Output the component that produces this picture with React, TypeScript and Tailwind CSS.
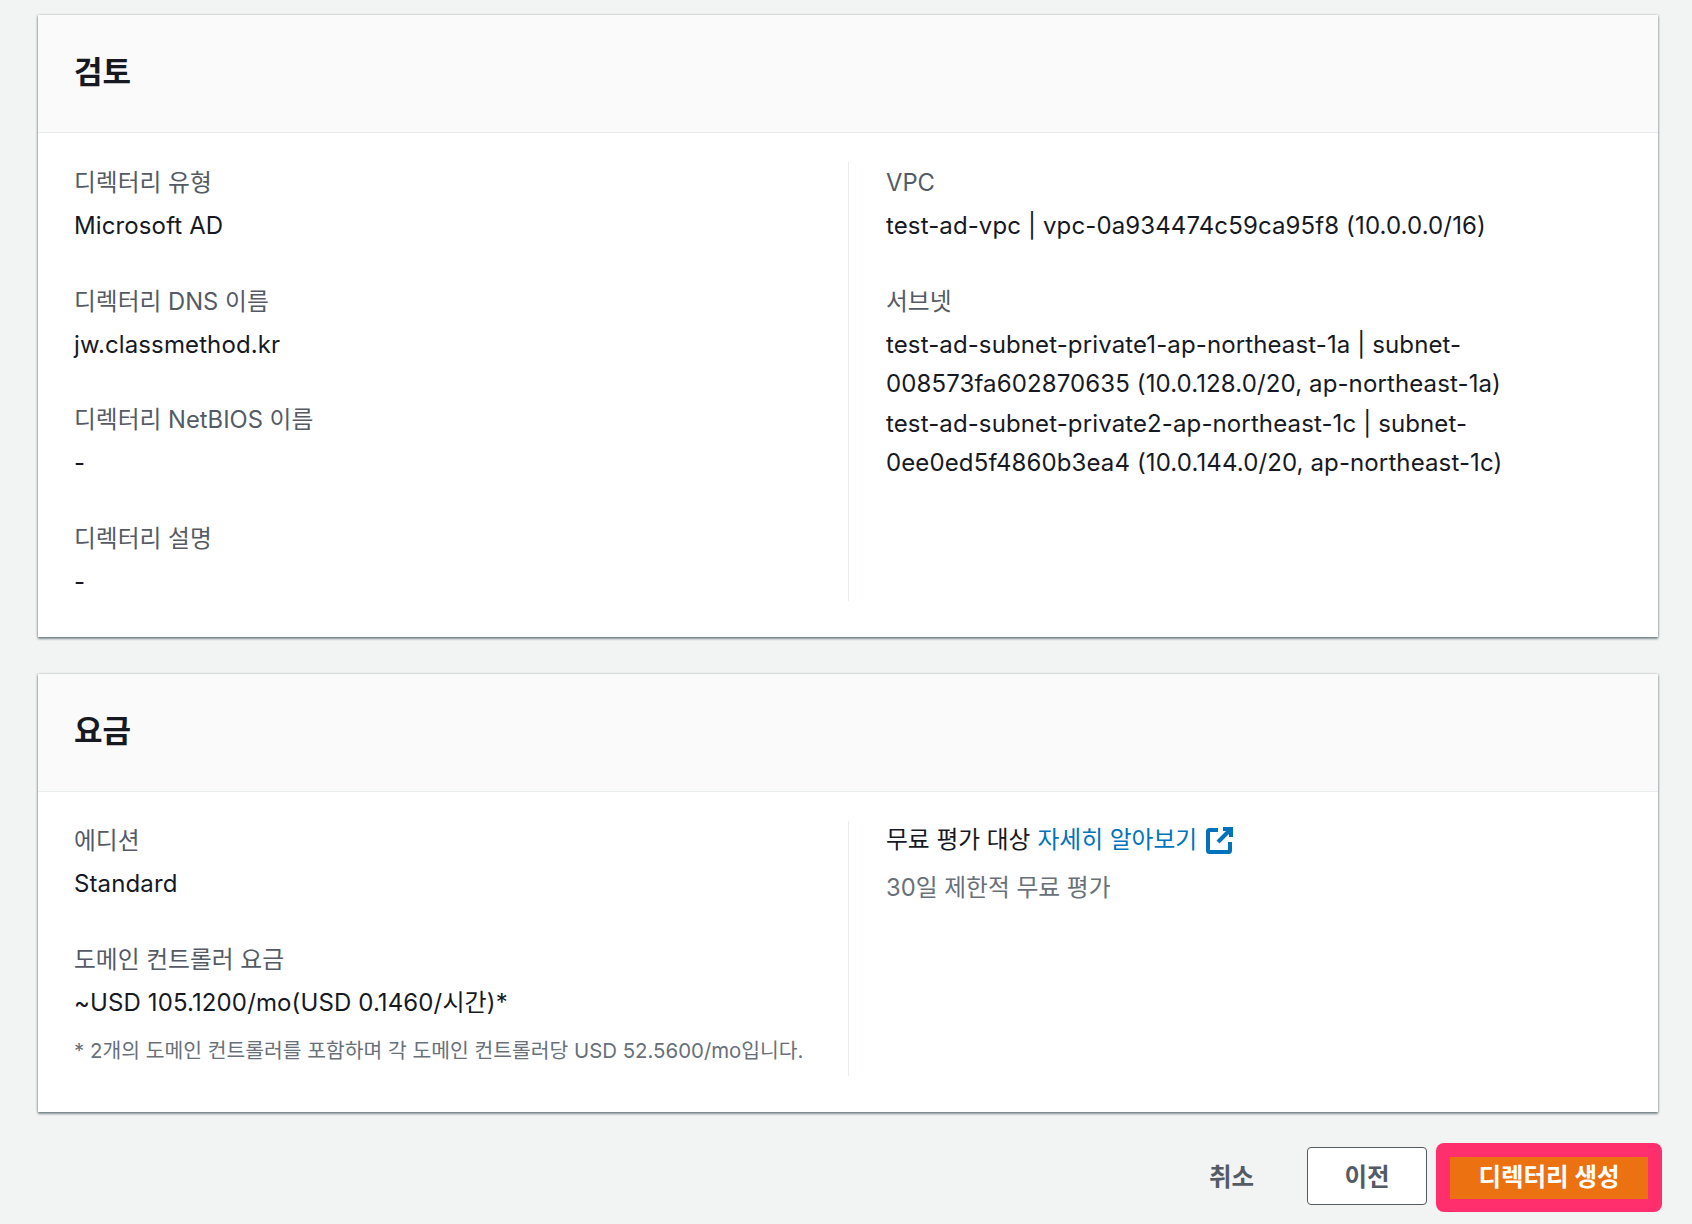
import React from "react";

const fontStack = "font-['Inter','Noto_Sans_CJK_KR',sans-serif]";

function Field({ label, children }: { label: string; children: React.ReactNode }) {
  return (
    <div className="mb-[35px] last:mb-0">
      <div className="h-[41px] leading-[41px] text-[#545b64]">{label}</div>
      <div className="mt-[3px] text-[24px] tracking-[0.12px] leading-[39.5px] text-[#16191f]">{children}</div>
    </div>
  );
}

function Card({ title, children }: { title: string; children: React.ReactNode }) {
  return (
    <section className="bg-white shadow-[0_2px_2px_rgba(0,28,36,0.45),-1px_0_2px_rgba(0,28,36,0.2),1px_0_2px_rgba(0,28,36,0.15)]">
      <header className="h-[118px] pl-[36px] pb-[3px] flex items-center bg-[#fafafa] border-b border-[#eaeded]">
        <h2 className="text-[31px] font-bold text-[#16191f]">{title}</h2>
      </header>
      {children}
    </section>
  );
}

function ExternalIcon() {
  return (
    <svg viewBox="0 0 28 28" className="w-[28px] h-[28px] ml-[9px] inline-block" fill="none" stroke="#0073bb" strokeWidth="4">
      <path d="M12 4H3.5a1.5 1.5 0 0 0-1.5 1.5v19a1.5 1.5 0 0 0 1.5 1.5h19a1.5 1.5 0 0 0 1.5-1.5V16" />
      <path d="M17 3h8v8" />
      <path d="M25 3L12 16" />
    </svg>
  );
}

export default function App() {
  return (
    <div className={`${fontStack} w-[1692px] h-[1224px] overflow-hidden bg-[#f2f3f3] pt-[15px] pl-[38px] pr-[34px] text-[23.75px]`}>
      <Card title="검토">
        <div className="grid grid-cols-[810px_1fr] pt-[29px] pb-[36px]">
          <div className="pl-[36px] h-[439px]">
            <Field label="디렉터리 유형">Microsoft AD</Field>
            <Field label="디렉터리 DNS 이름">jw.classmethod.kr</Field>
            <Field label="디렉터리 NetBIOS 이름">-</Field>
            <Field label="디렉터리 설명">-</Field>
          </div>
          <div className="border-l border-[#eaeded] pl-[37px] pr-[100px]">
            <Field label="VPC">test-ad-vpc | vpc-0a934474c59ca95f8 (10.0.0.0/16)</Field>
            <Field label="서브넷">
              <div>test-ad-subnet-private1-ap-northeast-1a | subnet-</div>
              <div>008573fa602870635 (10.0.128.0/20, ap-northeast-1a)</div>
              <div>test-ad-subnet-private2-ap-northeast-1c | subnet-</div>
              <div>0ee0ed5f4860b3ea4 (10.0.144.0/20, ap-northeast-1c)</div>
            </Field>
          </div>
        </div>
      </Card>

      <div className="mt-[37px]">
        <Card title="요금">
          <div className="grid grid-cols-[810px_1fr] pt-[29px] pb-[36px]">
            <div className="pl-[36px] h-[256px] -mt-[1px]">
              <Field label="에디션">Standard</Field>
              <div>
                <div className="h-[41px] leading-[41px] text-[#545b64]">도메인 컨트롤러 요금</div>
                <div className="mt-[3px] text-[24px] tracking-[0.12px] leading-[39.5px] text-[#16191f]">~USD 105.1200/mo(USD 0.1460/시간)*</div>
                <div className="mt-[13px] text-[20.4px] leading-[32px] text-[#687078]">* 2개의 도메인 컨트롤러를 포함하며 각 도메인 컨트롤러당 USD 52.5600/mo입니다.</div>
              </div>
            </div>
            <div className="border-l border-[#eaeded] pl-[37px]">
              <div className="h-[38px] flex items-center text-[#16191f]">
                <span>무료 평가 대상</span>
                <span className="ml-[7px] text-[#0073bb]">자세히 알아보기</span>
                <ExternalIcon />
              </div>
              <div className="mt-[9px] leading-[40px] text-[#687078]">30일 제한적 무료 평가</div>
            </div>
          </div>
        </Card>
      </div>

      <div className="mt-[31px] flex items-center justify-end -mr-[4px] text-[24.5px]">
        <button className="mr-[53px] font-bold text-[#545b64]">취소</button>
        <button className="w-[120px] h-[58px] pt-[3px] mr-[9px] mb-[4px] rounded-[4px] border border-[#545b64] bg-white font-bold text-[#545b64]">이전</button>
        <div className="w-[226px] h-[69px] rounded-[8px] bg-[#ff2f6e] flex items-center justify-center">
          <button className="w-[198px] h-[42px] bg-[#ec7211] font-bold text-white">디렉터리 생성</button>
        </div>
      </div>
    </div>
  );
}
